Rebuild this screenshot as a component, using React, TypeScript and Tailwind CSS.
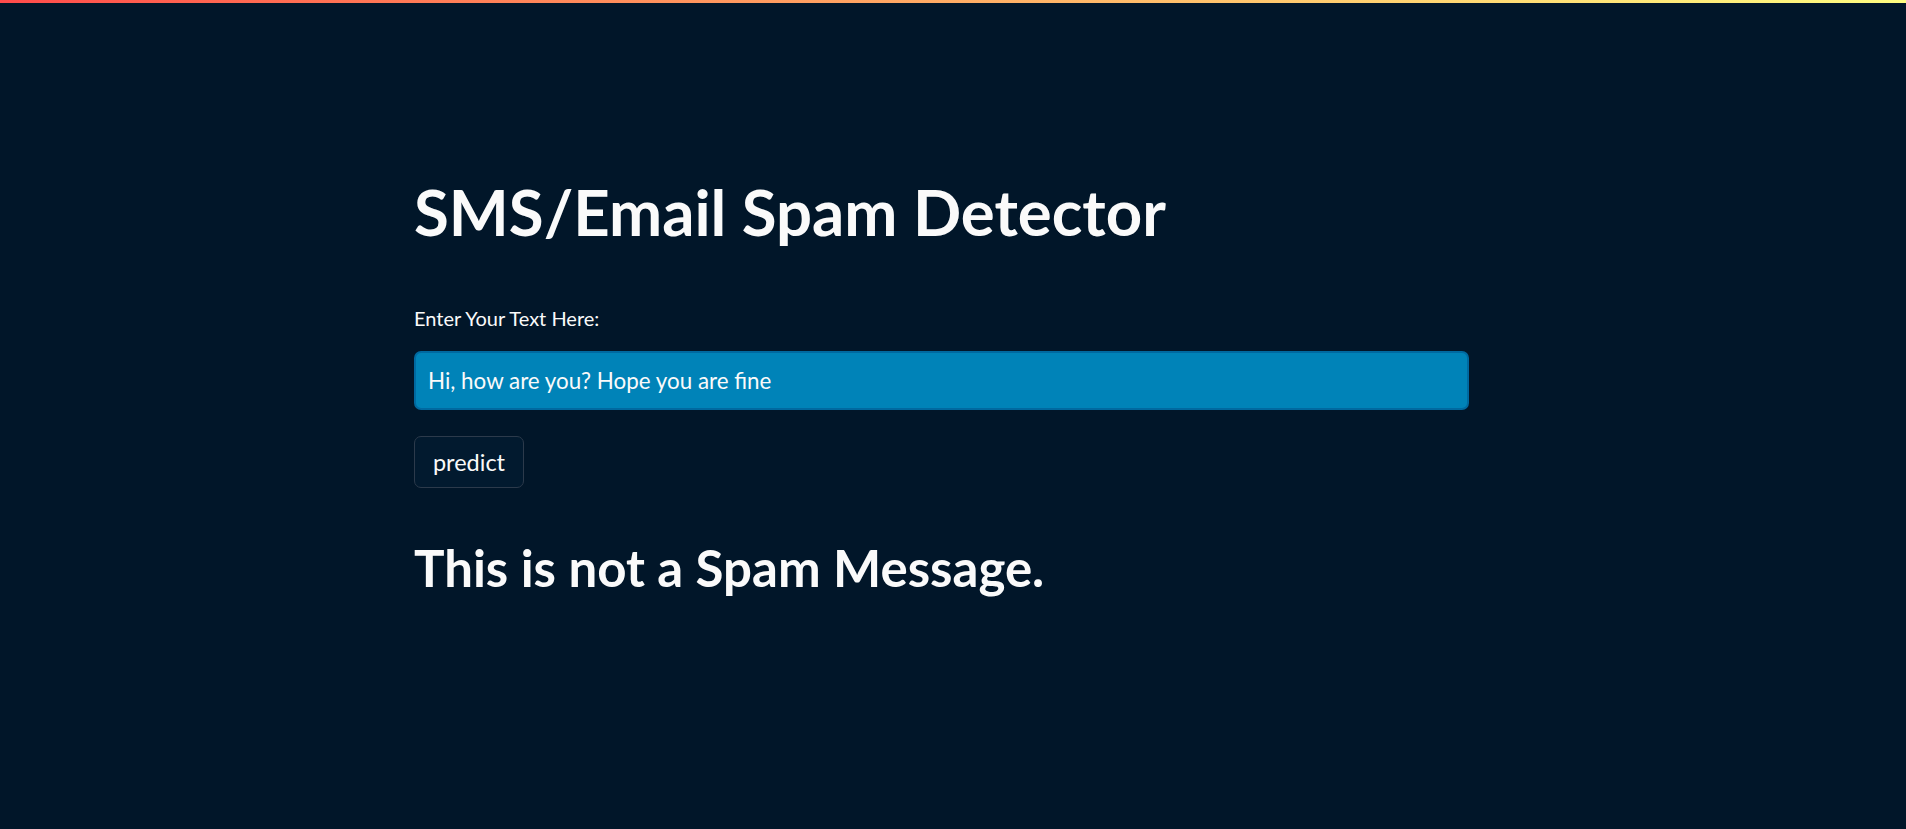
import React from "react";

export default function App() {
  return (
    <div
      className="min-h-screen w-full bg-[#011629] text-[#fafafa]"
      style={{ fontFamily: "Lato, 'Noto Sans', sans-serif" }}
    >
      <div className="h-[3px] w-full bg-gradient-to-r from-[#ff4b4b] to-[#fffd80]" />
      <div className="pl-[414px]">
        <div className="flex w-[1055px] flex-col items-start">
          <h1 className="mt-[173px] text-[63.5px] font-bold leading-[72px] text-[#fafafa]">
            SMS/Email Spam Detector
          </h1>
          <label className="mt-[56px] text-[20px] leading-[28px] text-[#fafafa]">
            Enter Your Text Here:
          </label>
          <div className="mt-[19px] flex h-[59px] w-full items-center rounded-[7px] border-2 border-[#0069a0] bg-[#0083b8] pl-[12px]">
            <span className="text-[22.4px] leading-[30px] text-[#fafafa]">
              Hi, how are you? Hope you are fine
            </span>
          </div>
          <button className="mt-[26px] flex h-[52px] w-[110px] items-center justify-center rounded-[7px] border border-[#2c3a4b] bg-[#021a2f] text-[23.5px] leading-[30px] text-[#fafafa]">
            predict
          </button>
          <h2 className="mt-[50px] text-[51px] font-bold leading-[60px] text-[#fafafa]">
            This is not a Spam Message.
          </h2>
        </div>
      </div>
    </div>
  );
}
